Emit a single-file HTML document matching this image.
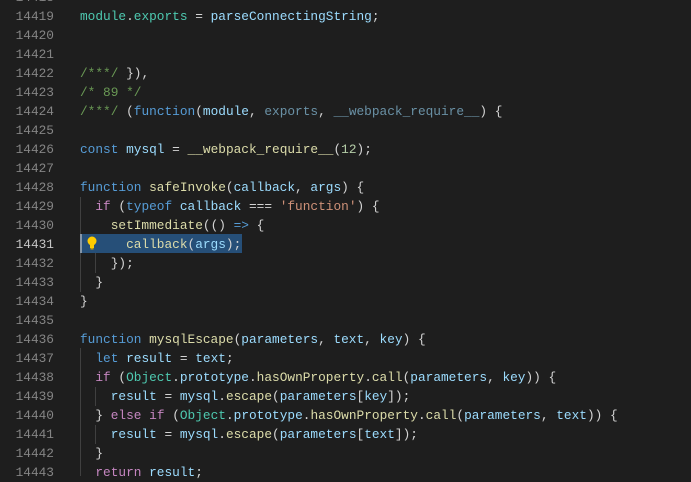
<!DOCTYPE html>
<html><head><meta charset="utf-8"><style>
body{margin:0;background:#1e1e1e;width:691px;height:476px;overflow:hidden;position:relative;font-family:"Liberation Mono",monospace;font-size:12.8px}
.l{position:absolute;left:0;height:19px;line-height:19px;width:691px;white-space:pre}
.n{position:absolute;left:0;width:54px;text-align:right;color:#858585}
.c{position:absolute;left:80px;color:#d4d4d4}
.g{position:absolute;width:1px;background:#404040}
.k{color:#569cd6}.p{color:#c586c0}.f{color:#dcdcaa}.v{color:#9cdcfe}.t{color:#4ec9b0}.cm{color:#6a9955}.s{color:#ce9178}.nu{color:#b5cea8}.cn{color:#9cdcfe}.u{color:#9cdcfe;opacity:.6}
.y,.o,.b{color:#d4d4d4}
</style></head><body>
<div class="g" style="left:80px;top:197px;height:95px"></div>
<div class="g" style="left:95px;top:235px;height:38px"></div>
<div class="g" style="left:80px;top:348px;height:128px"></div>
<div class="g" style="left:95px;top:387px;height:19px"></div>
<div class="g" style="left:95px;top:425px;height:19px"></div>
<div style="position:absolute;left:80px;top:234px;width:162px;height:19px;background:#264f78"></div>
<div style="position:absolute;left:80px;top:234px;width:2px;height:19px;background:#c6c6c6;opacity:.6"></div>
<svg style="position:absolute;left:86px;top:235px" width="12" height="16" viewBox="0 0 12 16"><circle cx="6" cy="6" r="4.5" fill="#ffcc00"/><rect x="4" y="9" width="4" height="4" fill="#ffcc00"/><rect x="4.5" y="13" width="3" height="1.5" fill="#c8a000"/></svg>
<div class="l" style="top:-12.5px"><span class="n">14418</span></div>
<div class="l" style="top:6.5px"><span class="n">14419</span><span class="c"><span class="t">module</span>.<span class="t">exports</span> = <span class="v">parseConnectingString</span>;</span></div>
<div class="l" style="top:25.5px"><span class="n">14420</span></div>
<div class="l" style="top:44.5px"><span class="n">14421</span></div>
<div class="l" style="top:63.5px"><span class="n">14422</span><span class="c"><span class="cm">/***/</span> <span class="y">}</span><span class="y">)</span>,</span></div>
<div class="l" style="top:82.5px"><span class="n">14423</span><span class="c"><span class="cm">/* 89 */</span></span></div>
<div class="l" style="top:101.5px"><span class="n">14424</span><span class="c"><span class="cm">/***/</span> <span class="b">(</span><span class="k">function</span><span class="y">(</span><span class="v">module</span>, <span class="u">exports</span>, <span class="u">__webpack_require__</span><span class="y">)</span> <span class="y">{</span></span></div>
<div class="l" style="top:120.5px"><span class="n">14425</span></div>
<div class="l" style="top:139.5px"><span class="n">14426</span><span class="c"><span class="k">const</span> <span class="cn">mysql</span> = <span class="f">__webpack_require__</span><span class="y">(</span><span class="nu">12</span><span class="y">)</span>;</span></div>
<div class="l" style="top:158.5px"><span class="n">14427</span></div>
<div class="l" style="top:177.5px"><span class="n">14428</span><span class="c"><span class="k">function</span> <span class="f">safeInvoke</span><span class="y">(</span><span class="v">callback</span>, <span class="v">args</span><span class="y">)</span> <span class="y">{</span></span></div>
<div class="l" style="top:196.5px"><span class="n">14429</span><span class="c">  <span class="p">if</span> <span class="o">(</span><span class="k">typeof</span> <span class="v">callback</span> === <span class="s">'function'</span><span class="o">)</span> <span class="o">{</span></span></div>
<div class="l" style="top:215.5px"><span class="n">14430</span><span class="c">    <span class="f">setImmediate</span><span class="b">(</span><span class="y">()</span> <span class="k">=&gt;</span> <span class="y">{</span></span></div>
<div class="l" style="top:234.5px"><span class="n" style="color:#c6c6c6">14431</span><span class="c">      <span class="f">callback</span><span class="o">(</span><span class="v">args</span><span class="o">)</span>;</span></div>
<div class="l" style="top:253.5px"><span class="n">14432</span><span class="c">    <span class="y">}</span><span class="b">)</span>;</span></div>
<div class="l" style="top:272.5px"><span class="n">14433</span><span class="c">  <span class="o">}</span></span></div>
<div class="l" style="top:291.5px"><span class="n">14434</span><span class="c"><span class="y">}</span></span></div>
<div class="l" style="top:310.5px"><span class="n">14435</span></div>
<div class="l" style="top:329.5px"><span class="n">14436</span><span class="c"><span class="k">function</span> <span class="f">mysqlEscape</span><span class="y">(</span><span class="v">parameters</span>, <span class="v">text</span>, <span class="v">key</span><span class="y">)</span> <span class="y">{</span></span></div>
<div class="l" style="top:348.5px"><span class="n">14437</span><span class="c">  <span class="k">let</span> <span class="v">result</span> = <span class="v">text</span>;</span></div>
<div class="l" style="top:367.5px"><span class="n">14438</span><span class="c">  <span class="p">if</span> <span class="o">(</span><span class="t">Object</span>.<span class="v">prototype</span>.<span class="f">hasOwnProperty</span>.<span class="f">call</span><span class="b">(</span><span class="v">parameters</span>, <span class="v">key</span><span class="b">)</span><span class="o">)</span> <span class="o">{</span></span></div>
<div class="l" style="top:386.5px"><span class="n">14439</span><span class="c">    <span class="v">result</span> = <span class="cn">mysql</span>.<span class="f">escape</span><span class="b">(</span><span class="v">parameters</span><span class="y">[</span><span class="v">key</span><span class="y">]</span><span class="b">)</span>;</span></div>
<div class="l" style="top:405.5px"><span class="n">14440</span><span class="c">  <span class="o">}</span> <span class="p">else</span> <span class="p">if</span> <span class="o">(</span><span class="t">Object</span>.<span class="v">prototype</span>.<span class="f">hasOwnProperty</span>.<span class="f">call</span><span class="b">(</span><span class="v">parameters</span>, <span class="v">text</span><span class="b">)</span><span class="o">)</span> <span class="o">{</span></span></div>
<div class="l" style="top:424.5px"><span class="n">14441</span><span class="c">    <span class="v">result</span> = <span class="cn">mysql</span>.<span class="f">escape</span><span class="b">(</span><span class="v">parameters</span><span class="y">[</span><span class="v">text</span><span class="y">]</span><span class="b">)</span>;</span></div>
<div class="l" style="top:443.5px"><span class="n">14442</span><span class="c">  <span class="o">}</span></span></div>
<div class="l" style="top:462.5px"><span class="n">14443</span><span class="c">  <span class="p">return</span> <span class="v">result</span>;</span></div>
</body></html>
